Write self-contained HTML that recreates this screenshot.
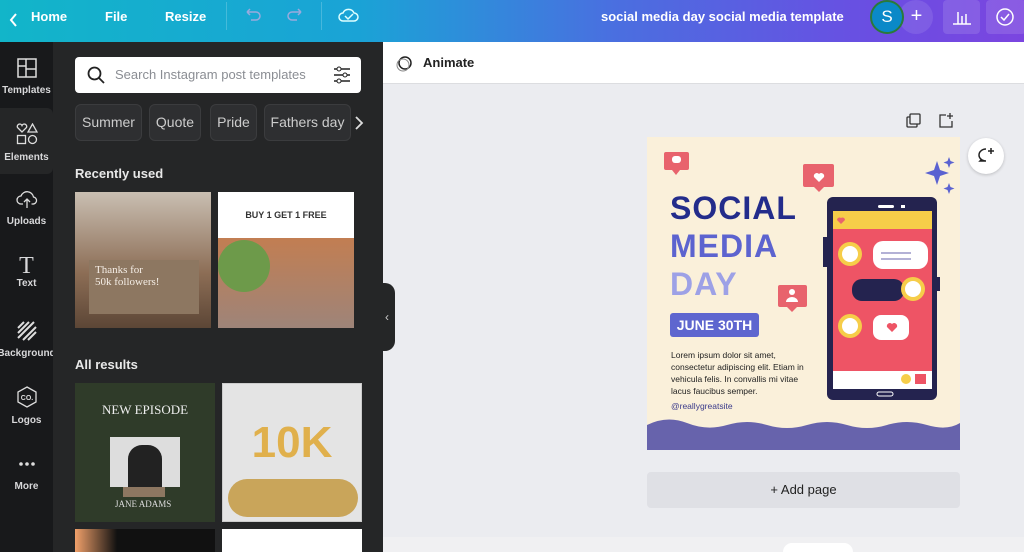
<!DOCTYPE html>
<html><head><meta charset="utf-8"><style>
*{box-sizing:border-box;margin:0;padding:0}
html,body{width:1024px;height:552px;overflow:hidden}
body{font-family:"Liberation Sans",sans-serif;background:#ebecf0;position:relative}
.abs{position:absolute}
.top{left:0;top:0;width:1024px;height:42px;background:linear-gradient(90deg,#12b5c9 0%,#1aa3d6 35%,#4a6fe0 60%,#6a4ee2 85%,#7b45e0 100%)}
.top span{position:absolute;color:#fff;font-weight:bold;font-size:13px;top:9px}
.rail{left:0;top:42px;width:53px;height:510px;background:#18191b;overflow:hidden}
.ri{position:absolute;left:-10px;width:73px;text-align:center;color:#d8d8da;font-size:10px;font-weight:bold;line-height:12px}
.ri svg{margin-bottom:3px}
.panel{left:53px;top:42px;width:330px;height:510px;background:#252627;overflow:hidden}
.chip{position:absolute;height:37px;border:1px solid #3b3c3e;background:#2e2f31;border-radius:6px;color:#ccc;font-size:14px;line-height:35px;text-align:center}
.h{position:absolute;color:#e8e8e8;font-weight:bold;font-size:13px}
</style></head><body>
<div class="abs top">
<svg class="abs" style="left:9px;top:12px" width="10" height="16"><path d="M7 2L2 8l5 6" stroke="#fff" stroke-width="2" fill="none"/></svg>
<span style="left:31px">Home</span><span style="left:105px">File</span><span style="left:165px">Resize</span>
<div class="abs" style="left:226px;top:2px;width:1px;height:28px;background:rgba(255,255,255,.2)"></div>
<svg class="abs" style="left:243px;top:8px" width="20" height="16"><path d="M4 4h9a4 4 0 010 8H8M4 4l3-3M4 4l3 3" stroke="#9ad" stroke-width="1.5" fill="none"/></svg>
<svg class="abs" style="left:285px;top:8px" width="20" height="16"><path d="M16 4H7a4 4 0 000 8h5M16 4l-3-3M16 4l-3 3" stroke="#9ad" stroke-width="1.5" fill="none"/></svg>
<div class="abs" style="left:321px;top:2px;width:1px;height:28px;background:rgba(255,255,255,.2)"></div>
<svg class="abs" style="left:337px;top:6px" width="22" height="18"><path d="M6 15h11a4 4 0 000-8 6 6 0 00-11 0 4 4 0 000 8z M8 10l3 3 5-5" stroke="#dff" stroke-width="1.5" fill="none"/></svg>
<span style="left:601px">social media day social media template</span>
<div class="abs" style="left:899px;top:0;width:34px;height:34px;border-radius:50%;background:rgba(255,255,255,.1);color:#fff;font-size:20px;text-align:center;line-height:32px;padding-left:1px">+</div>
<div class="abs" style="left:870px;top:0;width:34px;height:34px;border-radius:50%;background:#0a89c8;border:2px solid #2a7a3a;color:#fff;font-size:17px;text-align:center;line-height:30px">S</div>
<div class="abs" style="left:943px;top:0;width:37px;height:34px;border-radius:4px;background:rgba(255,255,255,.12)"><svg style="margin:8px 9px" width="20" height="18"><path d="M1 16h18M6 4v12M10 8v8M14 6v10" stroke="#fff" stroke-width="1.5"/></svg></div>
<div class="abs" style="left:986px;top:0;width:40px;height:34px;border-radius:4px;background:rgba(255,255,255,.12)"><svg style="margin:7px 9px" width="20" height="20"><circle cx="10" cy="10" r="8" stroke="#fff" stroke-width="1.5" fill="none"/><path d="M6 10l3 3 5-6" stroke="#fff" stroke-width="1.5" fill="none"/></svg></div>
</div>

<div class="abs rail">
<div class="abs" style="left:0;top:66px;width:53px;height:66px;background:#252627;border-radius:0 6px 6px 0"></div>
<div class="ri" style="top:16px"><svg width="20" height="20"><rect x="1" y="1" width="18" height="18" fill="none" stroke="#ddd" stroke-width="1.5"/><path d="M1 8h8M9 1v18M9 11h10" stroke="#ddd" stroke-width="1.5"/></svg><br>Templates</div>
<div class="ri" style="top:81px"><svg width="22" height="22"><path d="M6 9L1.5 4.5a2.3 2.3 0 014.5-2 2.3 2.3 0 014.5 2z" stroke="#ddd" fill="none" stroke-width="1.3"/><path d="M16.5 1l4.5 8h-9z" stroke="#ddd" fill="none" stroke-width="1.3"/><rect x="1.5" y="12.5" width="8" height="8" stroke="#ddd" fill="none" stroke-width="1.3"/><circle cx="16.5" cy="16.5" r="4" stroke="#ddd" fill="none" stroke-width="1.3"/></svg><br>Elements</div>
<div class="ri" style="top:147px"><svg width="22" height="20"><path d="M7 15H5a4 4 0 010-8 6.5 6.5 0 0112.5 1 3.5 3.5 0 01-1 7h-1M11 19V10M8 13l3-3 3 3" stroke="#ddd" fill="none" stroke-width="1.3"/></svg><br>Uploads</div>
<div class="ri" style="top:213px"><span style="font-family:'Liberation Serif';font-size:24px;font-weight:normal;line-height:23px">T</span><br>Text</div>
<div class="ri" style="top:279px"><svg width="20" height="20"><path d="M1 7l6-6M1 12L12 1M1 17L17 1M6 19L19 6M11 19l8-8" stroke="#ddd" stroke-width="2"/></svg><br>Background</div>
<div class="ri" style="top:344px"><svg width="22" height="22"><path d="M11 1l9 5v10l-9 5-9-5V6z" stroke="#ddd" fill="none" stroke-width="1.3"/><text x="11" y="14" font-size="7" fill="#ddd" text-anchor="middle" font-family="Liberation Sans" font-weight="bold">CO.</text></svg><br>Logos</div>
<div class="ri" style="top:412px"><svg width="20" height="20"><circle cx="4" cy="10" r="1.8" fill="#ddd"/><circle cx="10" cy="10" r="1.8" fill="#ddd"/><circle cx="16" cy="10" r="1.8" fill="#ddd"/></svg><br>More</div>
</div>

<div class="abs panel">
<div class="abs" style="left:22px;top:15px;width:286px;height:36px;background:#fff;border-radius:4px">
<svg class="abs" style="left:12px;top:9px" width="18" height="18"><circle cx="7.5" cy="7.5" r="6" stroke="#222" stroke-width="1.8" fill="none"/><path d="M12 12l5 5" stroke="#222" stroke-width="1.8"/></svg>
<span class="abs" style="left:40px;top:10px;font-size:13px;color:#8a8d93">Search Instagram post templates</span>
<svg class="abs" style="left:258px;top:9px" width="18" height="18"><path d="M1 3h16M1 9h16M1 15h16" stroke="#222" stroke-width="1.5"/><circle cx="6" cy="3" r="2" fill="#fff" stroke="#222"/><circle cx="12" cy="9" r="2" fill="#fff" stroke="#222"/><circle cx="6" cy="15" r="2" fill="#fff" stroke="#222"/></svg>
</div>
<div class="chip" style="left:22px;top:62px;width:67px">Summer</div>
<div class="chip" style="left:96px;top:62px;width:52px">Quote</div>
<div class="chip" style="left:157px;top:62px;width:47px">Pride</div>
<div class="chip" style="left:211px;top:62px;width:87px">Fathers day</div>
<svg class="abs" style="left:301px;top:73px" width="10" height="16"><path d="M2 2l6 6-6 6" stroke="#ddd" stroke-width="1.8" fill="none"/></svg>
<div class="h" style="left:22px;top:124px">Recently used</div>
<div class="abs" style="left:22px;top:150px;width:136px;height:136px;background:linear-gradient(#c9bfb2,#8c6d55 60%,#5c4636)"><div class="abs" style="left:14px;top:68px;width:110px;height:54px;background:#8d7761;color:#f5eee6;font-family:'Liberation Serif';font-size:11px;padding:4px 6px">Thanks for<br>50k followers!</div></div>
<div class="abs" style="left:165px;top:150px;width:136px;height:136px;background:linear-gradient(#fff 0 46px,#c27e52 46px,#9e8479)"><div style="text-align:center;font-size:9px;font-weight:bold;color:#333;margin-top:18px">BUY 1 GET 1 FREE</div><div class="abs" style="left:0;top:48px;width:52px;height:52px;border-radius:50%;background:#6d9a4a"></div></div>
<div class="h" style="left:22px;top:315px">All results</div>
<div class="abs" style="left:22px;top:341px;width:140px;height:139px;background:#2f3b29"><div style="text-align:center;color:#eee;font-family:'Liberation Serif';font-size:13px;margin-top:19px">NEW EPISODE</div><div class="abs" style="left:35px;top:54px;width:70px;height:50px;background:#ddd"><div style="margin:8px 18px;width:34px;height:42px;background:#222;border-radius:14px 14px 0 0"></div></div><div class="abs" style="left:48px;top:104px;width:42px;height:10px;background:#8d7761"></div><div class="abs" style="left:40px;top:116px;color:#ddd;font-family:'Liberation Serif';font-size:9px">JANE ADAMS</div></div>
<div class="abs" style="left:169px;top:341px;width:140px;height:139px;background:#e4e4e4;border:1px solid #ccc"><div style="text-align:center;color:#e0b04c;font-weight:bold;font-size:44px;margin-top:34px">10K</div><div class="abs" style="left:5px;top:95px;width:130px;height:38px;border-radius:20px;background:#c9a55a"></div></div>
<div class="abs" style="left:22px;top:487px;width:140px;height:23px;background:linear-gradient(90deg,#f0a06a,#111 30%)"></div>
<div class="abs" style="left:169px;top:487px;width:140px;height:23px;background:#fff"></div>
</div>
<div class="abs" style="left:383px;top:42px;width:12px;height:510px;background:#ebecf0"></div>
<div class="abs" style="left:379px;top:283px;width:16px;height:68px;background:#252627;border-radius:0 10px 10px 0;color:#ccc;font-size:12px;line-height:68px;text-align:center">‹</div>

<div class="abs" style="left:383px;top:42px;width:641px;height:42px;background:#fff;border-bottom:1px solid #dcdde0">
<svg class="abs" style="left:13px;top:13px" width="18" height="18"><circle cx="9" cy="8" r="6" stroke="#222" stroke-width="1.5" fill="none"/><circle cx="7" cy="10" r="6" stroke="#888" stroke-width="1" fill="none"/></svg>
<span class="abs" style="left:40px;top:13px;font-size:13px;font-weight:bold;color:#222">Animate</span></div>

<svg class="abs" style="left:906px;top:113px" width="16" height="16"><rect x="1" y="4" width="10" height="10" rx="1" stroke="#333" fill="none" stroke-width="1.3"/><rect x="4" y="1" width="10" height="10" rx="1" stroke="#333" fill="#ebecf0" stroke-width="1.3"/></svg>
<svg class="abs" style="left:938px;top:112px" width="16" height="16"><path d="M8 3H2v12h12V9M12 1v6M9 4h6" stroke="#333" fill="none" stroke-width="1.3"/></svg>
<div class="abs" style="left:968px;top:138px;width:36px;height:36px;border-radius:50%;background:#fff;box-shadow:0 1px 3px rgba(0,0,0,.2)"><svg style="margin:9px" width="18" height="18"><path d="M9 2a7 6 0 100 12H3l2-2" stroke="#222" fill="none" stroke-width="1.5"/><path d="M14 1v6M11 4h6" stroke="#222" stroke-width="1.5"/></svg></div>

<div class="abs" style="left:647px;top:137px;width:313px;height:313px;background:#faf0da;overflow:hidden">
<svg class="abs" style="left:0;top:0" width="313" height="313">
<rect x="17" y="15" width="25" height="18" rx="2" fill="#e8636d"/><path d="M25 33l4 5 4-5z" fill="#e8636d"/><rect x="25" y="19" width="9" height="7" rx="3" fill="#fff"/>
<rect x="156" y="27" width="31" height="23" rx="2" fill="#e8636d"/><path d="M167 50l5 5 5-5z" fill="#e8636d"/><path d="M172 45l-5-5a3 3 0 015-3 3 3 0 015 3z" fill="#fff"/>
<rect x="131" y="148" width="29" height="22" rx="2" fill="#e8636d"/><path d="M140 170l5 5 5-5z" fill="#e8636d"/><circle cx="145" cy="155" r="3" fill="#fff"/><path d="M139 165a6 5 0 0112 0z" fill="#fff"/>
<path d="M290 24l3 9 9 3-9 3-3 9-3-9-9-3 9-3z M302 20l1.5 4 4 1.5-4 1.5-1.5 4-1.5-4-4-1.5 4-1.5z M302 46l1.5 4 4 1.5-4 1.5-1.5 4-1.5-4-4-1.5 4-1.5z" fill="#5a62d1"/>
<path d="M0 288 Q20 278 40 286 T80 288 T120 288 T160 288 T200 288 T240 288 T280 288 T313 286 V313 H0z" fill="#6763ac"/>
<rect x="180" y="60" width="110" height="203" rx="6" fill="#24234f"/>
<rect x="176" y="100" width="5" height="30" fill="#24234f"/><rect x="289" y="140" width="4" height="14" fill="#24234f"/>
<rect x="231" y="68" width="16" height="3" rx="1.5" fill="#fff"/><rect x="254" y="68" width="4" height="3" fill="#fff"/>
<rect x="186" y="74" width="99" height="18" fill="#f6cd49"/><path d="M194 87l-4-4a2.5 2.5 0 014-2 2.5 2.5 0 014 2z" fill="#e8636d"/>
<rect x="186" y="92" width="99" height="142" fill="#ee5465"/>
<rect x="186" y="234" width="99" height="18" fill="#fff"/><circle cx="259" cy="242" r="5" fill="#f6cd49"/><rect x="268" y="237" width="11" height="10" fill="#ee5465"/>
<rect x="230" y="255" width="16" height="4" rx="2" fill="none" stroke="#fff"/>
<circle cx="203" cy="117" r="12" fill="#f6cd49"/><circle cx="203" cy="117" r="8" fill="#fff"/>
<rect x="226" y="104" width="55" height="28" rx="10" fill="#fff"/><path d="M234 116h30M234 122h30" stroke="#6763ac" stroke-width="1"/>
<rect x="205" y="142" width="52" height="22" rx="10" fill="#24234f"/>
<circle cx="266" cy="152" r="12" fill="#f6cd49"/><circle cx="266" cy="152" r="8" fill="#fff"/>
<circle cx="203" cy="189" r="12" fill="#f6cd49"/><circle cx="203" cy="189" r="8" fill="#fff"/>
<rect x="226" y="178" width="36" height="25" rx="8" fill="#fff"/><path d="M245 195l-5-5a3 3 0 015-3 3 3 0 015 3z" fill="#ee5465"/>
</svg>
<div class="abs" style="left:23px;top:52px;font-weight:bold;font-size:32px;letter-spacing:1px;color:#232c8b;line-height:38px">SOCIAL</div>
<div class="abs" style="left:23px;top:90px;font-weight:bold;font-size:32px;letter-spacing:1px;color:#5c63cf;line-height:38px">MEDIA</div>
<div class="abs" style="left:23px;top:128px;font-weight:bold;font-size:32px;letter-spacing:1px;color:#9da1e6;line-height:38px">DAY</div>
<div class="abs" style="left:23px;top:176px;width:89px;height:24px;background:#5e66cf;border-radius:3px;color:#fff;font-weight:bold;font-size:14px;text-align:center;line-height:24px">JUNE 30TH</div>
<div class="abs" style="left:24px;top:212px;font-size:8.5px;color:#222;line-height:12px;width:140px">Lorem ipsum dolor sit amet, consectetur adipiscing elit. Etiam in vehicula felis. In convallis mi vitae lacus faucibus semper.</div>
<div class="abs" style="left:24px;top:264px;font-size:8.5px;color:#3a3a8a">@reallygreatsite</div>
</div>

<div class="abs" style="left:647px;top:472px;width:313px;height:36px;background:#dfe0e5;border-radius:4px;text-align:center;line-height:36px;font-size:13px;color:#222">+ Add page</div>
<div class="abs" style="left:383px;top:537px;width:641px;height:15px;background:#f0f0f2"></div>
<div class="abs" style="left:783px;top:543px;width:70px;height:9px;border-radius:10px 10px 0 0;background:#fff"></div>
</body></html>
